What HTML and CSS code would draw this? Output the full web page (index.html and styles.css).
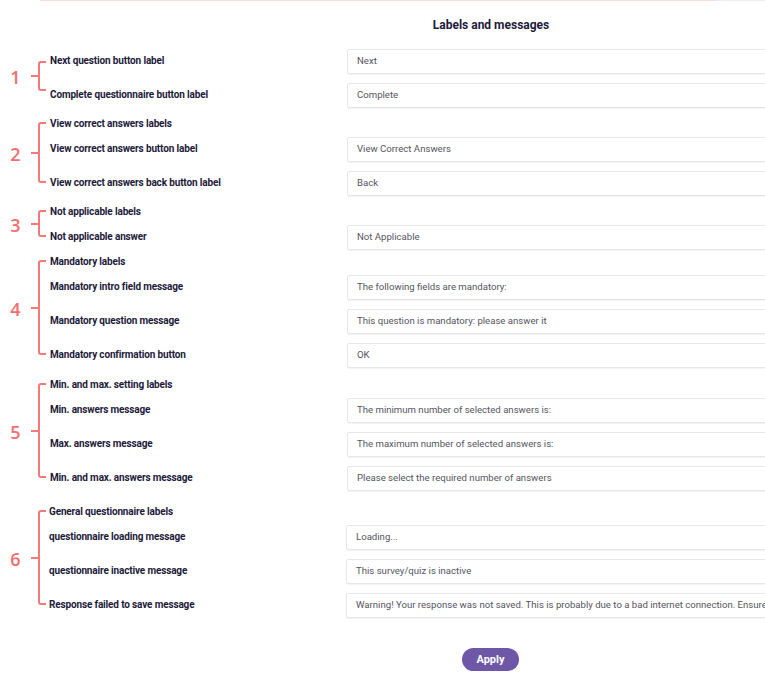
FILE: index.html
```html
<!DOCTYPE html>
<html lang="en">
<head>
<meta charset="utf-8">
<title>Labels and messages</title>
<link rel="stylesheet" href="styles.css">
</head>
<body>
<div class="topline"><span class="tl-gap"></span><span class="tl-pink"></span><span class="tl-gray"></span></div>
<h1 class="title">Labels and messages</h1>

<section class="group g1">
  <div class="anno anno-in"><span class="num">1</span><span class="tick"></span><span class="brace"></span></div>
  <div class="rows">
    <div class="row"><span class="label">Next question button label</span><div class="field">Next</div></div>
    <div class="row"><span class="label">Complete questionnaire button label</span><div class="field">Complete</div></div>
  </div>
</section>

<section class="group g2">
  <div class="anno anno-hd"><span class="num">2</span><span class="tick"></span><span class="brace"></span></div>
  <div class="rows">
    <div class="row head"><span class="label">View correct answers labels</span></div>
    <div class="row"><span class="label">View correct answers button label</span><div class="field">View Correct Answers</div></div>
    <div class="row"><span class="label">View correct answers back button label</span><div class="field">Back</div></div>
  </div>
</section>

<section class="group g3">
  <div class="anno anno-hd"><span class="num">3</span><span class="tick"></span><span class="brace"></span></div>
  <div class="rows">
    <div class="row head"><span class="label">Not applicable labels</span></div>
    <div class="row"><span class="label">Not applicable answer</span><div class="field">Not Applicable</div></div>
  </div>
</section>

<section class="group g4">
  <div class="anno anno-hd"><span class="num">4</span><span class="tick"></span><span class="brace"></span></div>
  <div class="rows">
    <div class="row head"><span class="label">Mandatory labels</span></div>
    <div class="row"><span class="label">Mandatory intro field message</span><div class="field">The following fields are mandatory:</div></div>
    <div class="row"><span class="label">Mandatory question message</span><div class="field">This question is mandatory: please answer it</div></div>
    <div class="row"><span class="label">Mandatory confirmation button</span><div class="field">OK</div></div>
  </div>
</section>

<section class="group g5">
  <div class="anno anno-hd"><span class="num">5</span><span class="tick"></span><span class="brace"></span></div>
  <div class="rows">
    <div class="row head"><span class="label">Min. and max. setting labels</span></div>
    <div class="row"><span class="label">Min. answers message</span><div class="field">The minimum number of selected answers is:</div></div>
    <div class="row"><span class="label">Max. answers message</span><div class="field">The maximum number of selected answers is:</div></div>
    <div class="row"><span class="label">Min. and max. answers message</span><div class="field">Please select the required number of answers</div></div>
  </div>
</section>

<section class="group g6">
  <div class="anno anno-hd"><span class="num">6</span><span class="tick"></span><span class="brace"></span></div>
  <div class="rows">
    <div class="row head"><span class="label">General questionnaire labels</span></div>
    <div class="row"><span class="label">questionnaire loading message</span><div class="field">Loading...</div></div>
    <div class="row"><span class="label">questionnaire inactive message</span><div class="field">This survey/quiz is inactive</div></div>
    <div class="row"><span class="label">Response failed to save message</span><div class="field">Warning! Your response was not saved. This is probably due to a bad internet connection. Ensure your connection is stable and try again.</div></div>
  </div>
</section>

<div class="actions"><button class="apply" type="button">Apply</button></div>
</body>
</html>
```

FILE: styles.css
```css
html, body {
  margin: 0;
  padding: 0;
  overflow: hidden;
  background: #ffffff;
}
body {
  width: 765px;
  font-family: Roboto, "Liberation Sans", Arial, sans-serif;
  color: #1d1a3a;
}
.topline {
  display: flex;
  height: 1px;
}
.tl-gap { width: 40px; }
.tl-pink { width: 676px; background: #fadcdc; }
.tl-gray { flex: 1; background: #ececee; }

.title {
  margin: 0;
  padding: 17px 0 12px 217px;
  font-size: 12px;
  line-height: 14px;
  font-weight: 700;
  text-align: center;
  color: #1d1a3a;
}

.group {
  display: flex;
}
.g2, .g3 { margin-top: 4px; }
.g4 { margin-top: 0; }
.g5 { margin-top: 5px; }
.g6 { margin-top: 9px; }

.anno {
  width: 50px;
  flex: none;
  display: flex;
  align-items: center;
  padding-bottom: 17px;
  box-sizing: border-box;
}
.anno-in { padding-top: 17px; padding-bottom: 21px; }
.anno-hd { padding-top: 6px; }
.num {
  width: 11px;
  margin-left: 10px;
  margin-right: 10px;
  padding-top: 2px;
  text-align: center;
  font-family: "Open Sans", "Noto Sans", sans-serif;
  font-weight: 600;
  font-size: 18px;
  line-height: 18px;
  color: #f26e6e;
}
.tick {
  width: 7px;
  height: 2px;
  background: #f47a7a;
}
.brace {
  align-self: stretch;
  width: 6px;
  border: 2px solid #f47a7a;
  border-right: none;
  border-radius: 3px 0 0 3px;
  margin-right: 4px;
}

.rows {
  flex: 1;
  min-width: 0;
}
.row {
  display: flex;
  align-items: center;
  height: 34px;
}
.row.head { height: 16px; }
.label {
  width: 297px;
  flex: none;
  font-size: 10px;
  font-weight: 700;
  letter-spacing: -0.15px;
  line-height: 12px;
  color: #1d1a3a;
  white-space: nowrap;
}
.g6 .label { margin-left: -1px; margin-right: 1px; }
.g6 .field { margin-left: -1px; }
.field {
  flex: none;
  width: 470px;
  height: 25px;
  box-sizing: border-box;
  padding: 0 9px 1px;
  display: flex;
  align-items: center;
  border: 1px solid #e7e7eb;
  border-radius: 2px;
  box-shadow: 0 1px 1px rgba(0, 0, 0, 0.05);
  font-size: 9.6px;
  color: #555560;
  white-space: nowrap;
  overflow: hidden;
}

.actions {
  display: flex;
  justify-content: center;
  padding-left: 216px;
  margin-top: 26px;
}
.apply {
  width: 57px;
  height: 23px;
  border: none;
  border-radius: 12px;
  background: #6f57a8;
  color: #ffffff;
  font-family: Roboto, "Liberation Sans", Arial, sans-serif;
  font-weight: 700;
  font-size: 11px;
  padding: 0;
  cursor: pointer;
}
```
